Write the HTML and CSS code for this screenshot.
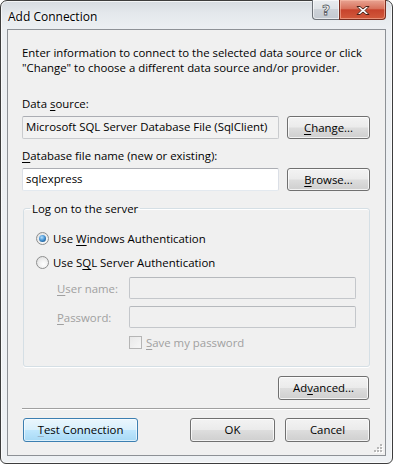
FILE: index.html
```html
<!DOCTYPE html>
<html>
<head>
<meta charset="utf-8">
<link rel="stylesheet" href="styles.css">
</head>
<body>
<div class="window">
  <div class="titlebar">
    <span class="title">Add Connection</span>
    <div class="caption-btns">
      <div class="cbtn help"><span class="qmark">?</span></div>
      <div class="cbtn close">
        <svg width="14" height="11" viewBox="0 0 14 11"><path d="M1 1.5 L4 1.5 L7 4 L10 1.5 L13 1.5 L9 5.5 L13 9.5 L10 9.5 L7 7 L4 9.5 L1 9.5 L5 5.5 Z" fill="#fff" stroke="#4a2318" stroke-width="1" stroke-linejoin="round"/></svg>
      </div>
    </div>
  </div>
  <div class="client">
    <p class="intro">Enter information to connect to the selected data source or click<br>"Change" to choose a different data source and/or provider.</p>
    <div class="lbl lbl-first">Data <u>s</u>ource:</div>
    <div class="row">
      <div class="field readonly">Microsoft SQL Server Database File (SqlClient)</div>
      <div class="btn side-btn"><span><u>C</u>hange...</span></div>
    </div>
    <div class="lbl lbl-second"><u>D</u>atabase file name (new or existing):</div>
    <div class="row">
      <div class="field">sqlexpress</div>
      <div class="btn side-btn"><span><u>B</u>rowse...</span></div>
    </div>
    <fieldset class="group">
      <legend>Log on to the server</legend>
      <div class="opt opt-first"><span class="radio checked"></span><span>Use <u>W</u>indows Authentication</span></div>
      <div class="opt"><span class="radio"></span><span>Use S<u>Q</u>L Server Authentication</span></div>
      <div class="cred cred-first">
        <span class="cred-lbl"><u>U</u>ser name:</span>
        <div class="field disabled"></div>
      </div>
      <div class="cred">
        <span class="cred-lbl"><u>P</u>assword:</span>
        <div class="field disabled"></div>
      </div>
      <div class="save"><span class="check"></span><span><u>S</u>ave my password</span></div>
    </fieldset>
    <div class="adv-row">
      <div class="btn adv-btn"><span>Ad<u>v</u>anced...</span></div>
    </div>
    <div class="sep"></div>
    <div class="bottom-row">
      <div class="btn default test-btn"><span><u class="faint">T</u>est Connection</span></div>
      <div class="right-btns">
        <div class="btn dlg-btn">OK</div>
        <div class="btn dlg-btn">Cancel</div>
      </div>
    </div>
    <svg class="grip" width="10" height="10" viewBox="0 0 10 10">
      <g fill="#fff"><rect x="8" y="2" width="2" height="2"/><rect x="5" y="5" width="2" height="2"/><rect x="8" y="5" width="2" height="2"/><rect x="2" y="8" width="2" height="2"/><rect x="5" y="8" width="2" height="2"/><rect x="8" y="8" width="2" height="2"/></g>
      <g fill="#b8b8b8"><rect x="7" y="1" width="2" height="2"/><rect x="4" y="4" width="2" height="2"/><rect x="7" y="4" width="2" height="2"/><rect x="1" y="7" width="2" height="2"/><rect x="4" y="7" width="2" height="2"/><rect x="7" y="7" width="2" height="2"/></g>
    </svg>
  </div>
</div>
</body>
</html>
```

FILE: styles.css
```css
* { box-sizing: border-box; }
html, body { margin: 0; padding: 0; background: #ffffff; }
body {
  font-family: "Open Sans", "Noto Sans", sans-serif;
  font-size: 11.4px;
  color: #000;
}
u { text-decoration: underline; text-underline-offset: 1.5px; }
u.faint { text-decoration-color: #9ab4c8; }

.window {
  width: 393px;
  height: 464px;
  border: 1px solid #3d3d3d;
  border-radius: 7px 7px 6px 6px;
  background: linear-gradient(180deg, #d6dbe1 0px, #e4e8ec 12px, #eceff2 28px, #eef1f4 100%);
  padding: 0 6px 7px 6px;
  display: flex;
  flex-direction: column;
  box-shadow: inset 0 0 0 1px rgba(255,255,255,0.7);
}

.titlebar {
  height: 28px;
  display: flex;
  align-items: flex-start;
  justify-content: space-between;
  flex-shrink: 0;
}
.title {
  font-size: 12px;
  margin-top: 7px;
  margin-left: 1px;
  color: #000;
  text-shadow: 0 0 6px #fff, 0 0 3px #fff;
}
.caption-btns {
  display: flex;
  margin-top: -1px;
}
.cbtn {
  height: 20px;
  border: 1px solid #6d7278;
  border-top: none;
  display: flex;
  align-items: center;
  justify-content: center;
}
.help {
  width: 27px;
  border-radius: 0 0 0 4px;
  border-right: none;
  background: linear-gradient(180deg, #e9ecef 0%, #dfe3e7 45%, #cdd2d8 50%, #c3c9d0 100%);
  box-shadow: inset 0 0 0 1px rgba(255,255,255,0.6);
}
.qmark {
  font-family: "DejaVu Sans", sans-serif;
  font-size: 14px;
  font-weight: bold;
  color: #fbfbfb;
  -webkit-text-stroke: 0.8px #5a5f66;
  line-height: 1;
  margin-top: 1px;
}
.close {
  width: 47px;
  border-radius: 0 0 4px 0;
  border-color: #7a2d1f;
  background: linear-gradient(180deg, #e8a493 0%, #d8725c 45%, #c7432c 52%, #d25a3c 100%);
  box-shadow: inset 0 0 0 1px rgba(255,200,180,0.5);
}
.close svg { display: block; margin-top: 1px; }

.client {
  position: relative;
  flex: 1;
  background: #f0f0f0;
  border: 1px solid #8d9196;
  padding: 15px 15px 0 14px;
  display: flex;
  flex-direction: column;
}

.intro {
  margin: 0;
  line-height: 15px;
  white-space: nowrap;
}
.lbl { line-height: 15px; white-space: nowrap; }
.lbl-first { margin-top: 21px; }
.lbl-second { margin-top: 9px; }

.row {
  display: flex;
  gap: 8px;
  margin-top: 5px;
  height: 23px;
}
.field {
  height: 23px;
  flex: 1;
  background: #fff;
  border: 1px solid #dbdfe6;
  border-top-color: #abadb3;
  border-bottom-color: #e3e9ef;
  border-radius: 2px;
  padding-left: 3px;
  line-height: 20px;
  white-space: nowrap;
  overflow: hidden;
}
.field.readonly {
  background: #f2f2f2;
  border-color: #c9cbce;
  border-top-color: #abadb3;
}
.field.disabled {
  background: #f0f0f0;
  border-color: #c4c7cb;
  border-top-color: #b6b9bd;
}

.btn {
  height: 23px;
  border: 1px solid #707070;
  border-radius: 3px;
  background: linear-gradient(180deg, #f3f3f3 0%, #ebebeb 48%, #dddddd 52%, #cfcfcf 100%);
  box-shadow: inset 0 0 0 1px rgba(255,255,255,0.75);
  display: flex;
  align-items: center;
  justify-content: center;
  white-space: nowrap;
  padding-bottom: 1px;
}
.btn.default {
  border-color: #3c7fb1;
  background: linear-gradient(180deg, #eaf6fd 0%, #d9f0fc 48%, #bee6fd 52%, #a7d9f5 100%);
  box-shadow: inset 0 0 0 1px rgba(255,255,255,0.6);
}
.side-btn { width: 83px; flex-shrink: 0; }

.group {
  margin: 10px 0 0 1px;
  padding: 0 13px 0 12px;
  border: 1px solid #d5dfe5;
  border-radius: 3px;
  box-shadow: 0 1px 0 #fff, inset 0 1px 0 #fff;
  min-width: 0;
  height: 166px;
}
.group legend {
  padding: 0 2px;
  margin-left: -6px;
  line-height: 15px;
  white-space: nowrap;
}

.opt {
  display: flex;
  align-items: center;
  line-height: 15px;
  height: 15px;
  white-space: nowrap;
}
.opt-first { margin-top: 15px; }
.opt + .opt { margin-top: 9px; }

.radio {
  width: 13px;
  height: 13px;
  border-radius: 50%;
  border: 1px solid #8e8f8f;
  background: radial-gradient(circle at 60% 65%, #ffffff 0%, #f2f2f2 40%, #d8d8d8 100%);
  margin-right: 4px;
  position: relative;
  flex-shrink: 0;
}
.radio.checked::after {
  content: "";
  position: absolute;
  left: 2px;
  top: 2px;
  width: 7px;
  height: 7px;
  border-radius: 50%;
  background: radial-gradient(circle at 40% 35%, #b6e0fb 0%, #4a96d6 45%, #1c5a92 80%, #16416b 100%);
}

.cred {
  display: flex;
  align-items: center;
  margin-left: 21px;
  height: 22px;
}
.cred-first { margin-top: 7px; }
.cred + .cred { margin-top: 7px; }
.cred-lbl {
  width: 72px;
  color: #a0a0a0;
  white-space: nowrap;
  flex-shrink: 0;
}
.cred .field { height: 22px; }

.save {
  display: flex;
  align-items: center;
  margin-left: 93px;
  margin-top: 7px;
  height: 15px;
  color: #a0a0a0;
  white-space: nowrap;
}
.check {
  width: 13px;
  height: 13px;
  border: 1px solid #b5b5b5;
  background: linear-gradient(135deg, #e8e8e8 0%, #f6f6f6 100%);
  margin-right: 4px;
  flex-shrink: 0;
}

.adv-row {
  display: flex;
  justify-content: flex-end;
  margin-top: 9px;
  padding-right: 1px;
}
.adv-btn { width: 91px; height: 24px; }

.sep {
  margin-top: 8px;
  height: 2px;
  border-top: 1px solid #a0a0a0;
  border-bottom: 1px solid #ffffff;
}

.bottom-row {
  display: flex;
  justify-content: space-between;
  margin-top: 8px;
}
.test-btn { width: 115px; height: 24px; margin-left: 1px; }
.right-btns { display: flex; gap: 10px; }
.dlg-btn { width: 85px; height: 24px; }

.grip {
  position: absolute;
  right: 2px;
  bottom: 2px;
}
```
